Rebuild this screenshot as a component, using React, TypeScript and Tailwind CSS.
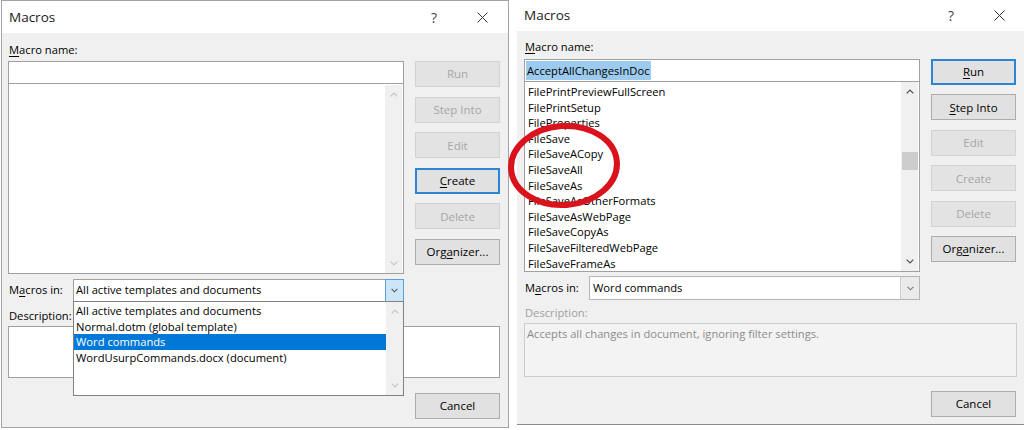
import React from "react"

function Chevron({ up, color = "#606060", w = 8 }: { up?: boolean; color?: string; w?: number }) {
  return (
    <svg width={w} height={5} viewBox="0 0 8 5" className="block">
      <path d={up ? "M0.7 4.3 L4 1 L7.3 4.3" : "M0.7 0.7 L4 4 L7.3 0.7"} stroke={color} strokeWidth={1.2} fill="none" />
    </svg>
  )
}

function CloseX() {
  return (
    <svg width={11} height={11} viewBox="0 0 11 11" className="block">
      <path d="M0.5 0.5 L10.5 10.5 M10.5 0.5 L0.5 10.5" stroke="#333" strokeWidth={1} fill="none" />
    </svg>
  )
}

function Label({ text, u }: { text: string; u?: number }) {
  if (u === undefined) return <>{text}</>
  return (
    <>
      {text.slice(0, u)}
      <span className="underline underline-offset-[2px]">{text[u]}</span>
      {text.slice(u + 1)}
    </>
  )
}

function Btn({ text, u, disabled, focus }: { text: string; u?: number; disabled?: boolean; focus?: boolean }) {
  return (
    <div
      className={`h-[26px] w-[85px] flex items-center justify-center text-[11.5px] ${
        disabled
          ? "bg-[#e3e3e3] border border-[#d2d2d2] text-[#a6a6a6]"
          : focus
          ? "bg-[#e1e1e1] border-2 border-[#2a86d3] text-black"
          : "bg-[#e1e1e1] border border-[#adadad] text-black"
      }`}
    >
      <Label text={text} u={u} />
    </div>
  )
}

function TitleBar({ h }: { h: string }) {
  return (
    <div className={`${h} bg-white flex items-center pl-[7px] pr-[20px]`}>
      <span className="text-[13.5px] text-[#1a1a1a]">Macros</span>
      <span className="ml-auto text-[14px] text-[#444] mr-[40px]">?</span>
      <CloseX />
    </div>
  )
}

function ScrollCol({ active, thumb }: { active?: boolean; thumb?: boolean }) {
  const c = active ? "#505050" : "#c4c4c4"
  return (
    <div className="w-[17px] h-full bg-[#f0f0f0] flex flex-col items-center py-[7px]">
      <Chevron up color={c} />
      {thumb && <div className="mt-[58px] w-[16px] h-[18px] bg-[#cdcdcd]" />}
      <div className="mt-auto">
        <Chevron color={c} />
      </div>
    </div>
  )
}

const leftItems = [
  "All active templates and documents",
  "Normal.dotm (global template)",
  "Word commands",
  "WordUsurpCommands.docx (document)",
]

const rightItems = [
  "FilePrintPreviewFullScreen",
  "FilePrintSetup",
  "FileProperties",
  "FileSave",
  "FileSaveACopy",
  "FileSaveAll",
  "FileSaveAs",
  "FileSaveAsOtherFormats",
  "FileSaveAsWebPage",
  "FileSaveCopyAs",
  "FileSaveFilteredWebPage",
  "FileSaveFrameAs",
]

function LeftDialog() {
  return (
    <div className="w-[508px] h-[428px] border border-[#a3a3a3] flex flex-col shrink-0 ml-[1px]">
      <TitleBar h="h-[32px]" />
      <div className="flex-1 bg-[#f0f0f0] pl-[6px] pr-[8px] pt-[9px]">
        <div className="flex gap-[11px]">
          <div className="w-[396px] flex flex-col">
            <div className="h-[19px] leading-[16px] pl-[1px] text-[11.2px]">
              <Label text="Macro name:" u={0} />
            </div>
            <div className="h-[23px] bg-white border border-[#a0a0a0]" />
            <div className="h-[190px] bg-white border border-t-0 border-[#a0a0a0] flex justify-end">
              <div className="h-full pr-[1px] pt-[1px]">
                <ScrollCol />
              </div>
            </div>
            <div className="mt-[5px] flex items-center h-[23px]">
              <div className="w-[65px] pl-[1px] text-[11.2px]">
                <Label text="Macros in:" u={1} />
              </div>
              <div className="relative flex-1 h-full bg-white border border-[#a0a0a0] flex">
                <div className="flex-1 pl-[2px] flex items-center text-[11.2px]">All active templates and documents</div>
                <div className="w-[19px] -my-[1px] -mr-[1px] bg-[#cde6f7] border border-[#5a9fd8] flex items-center justify-center">
                  <Chevron color="#555" w={7} />
                </div>
                <div className="absolute left-[-1px] right-[-1px] top-full h-[95px] bg-white border border-[#828282] flex z-10">
                  <div className="flex-1 pt-[1px]">
                    {leftItems.map(t => (
                      <div
                        key={t}
                        className={`h-[15.6px] leading-[15.6px] pl-[2px] text-[11.2px] ${
                          t === "Word commands" ? "bg-[#0078d7] text-white" : "text-black"
                        }`}
                      >
                        {t}
                      </div>
                    ))}
                  </div>
                  <div className="h-full">
                    <ScrollCol />
                  </div>
                </div>
              </div>
            </div>
          </div>
          <div className="w-[85px] pt-[19px] flex flex-col gap-[9.6px]">
            <Btn text="Run" disabled />
            <Btn text="Step Into" disabled />
            <Btn text="Edit" disabled />
            <Btn text="Create" u={0} focus />
            <Btn text="Delete" disabled />
            <Btn text="Organizer..." u={3} />
          </div>
        </div>
        <div className="mt-[6px] h-[16px] leading-[16px] pl-[1px] text-[11.2px]">Description:</div>
        <div className="mt-[2px] h-[52px] bg-white border border-[#a0a0a0]" />
        <div className="mt-[15px] flex justify-end">
          <Btn text="Cancel" />
        </div>
      </div>
    </div>
  )
}

function RightDialog() {
  return (
    <div className="w-[508px] h-[425px] border-b border-[#8a8a8a] flex flex-col shrink-0 ml-[8px]">
      <TitleBar h="h-[31px]" />
      <div className="flex-1 bg-[#f0f0f0] px-[7px] pt-[8px]">
        <div className="flex gap-[11px]">
          <div className="w-[396px] flex flex-col">
            <div className="h-[20px] leading-[16px] pl-[1px] text-[11.2px]">
              <Label text="Macro name:" u={0} />
            </div>
            <div className="h-[23px] bg-white border border-[#a0a0a0] pl-[1px] flex items-center">
              <span className="bg-[#9ccbef] h-[19px] leading-[19px] px-[1px] text-[11.2px]">AcceptAllChangesInDoc</span>
            </div>
            <div className="h-[190px] bg-white border border-t-0 border-[#a0a0a0] flex">
              <div className="flex-1 pl-[3px] pt-[2px]">
                {rightItems.map(t => (
                  <div key={t} className="h-[15.6px] leading-[15.6px] text-[11.2px]">
                    {t}
                  </div>
                ))}
              </div>
              <div className="h-full pr-[1px]">
                <ScrollCol active thumb />
              </div>
            </div>
            <div className="mt-[4px] flex items-center h-[24px]">
              <div className="w-[65px] pl-[1px] text-[11.2px]">
                <Label text="Macros in:" u={1} />
              </div>
              <div className="flex-1 h-full bg-white border border-[#b5b5b5] flex">
                <div className="flex-1 pl-[3px] flex items-center text-[11.2px]">Word commands</div>
                <div className="w-[19px] bg-[#eaeaea] border-l border-[#cfcfcf] flex items-center justify-center">
                  <Chevron color="#777" w={7} />
                </div>
              </div>
            </div>
          </div>
          <div className="w-[85px] pt-[20px] flex flex-col gap-[9.4px]">
            <Btn text="Run" u={0} focus />
            <Btn text="Step Into" u={0} />
            <Btn text="Edit" disabled />
            <Btn text="Create" disabled />
            <Btn text="Delete" disabled />
            <Btn text="Organizer..." u={3} />
          </div>
        </div>
        <div className="mt-[5px] h-[16px] leading-[16px] pl-[1px] text-[11.2px] text-[#a0a0a0]">Description:</div>
        <div className="mt-[2px] h-[54px] w-[493px] bg-[#f3f3f3] border border-[#cccccc] pl-[2px] pt-[2px] text-[11.2px] text-[#8c8c8c]">
          Accepts all changes in document, ignoring filter settings.
        </div>
        <div className="mt-[14px] w-[492px] flex justify-end">
          <Btn text="Cancel" />
        </div>
      </div>
    </div>
  )
}

export default function App() {
  return (
    <div className="relative w-[1024px] h-[430px] overflow-hidden bg-white flex font-['Open_Sans',sans-serif] text-black">
      <LeftDialog />
      <RightDialog />
      <svg className="absolute left-0 top-0 pointer-events-none" width={1024} height={430}>
        <ellipse cx={564} cy={165.5} rx={53} ry={39.5} transform="rotate(-4 564 165.5)" stroke="#d9121c" strokeWidth={6} fill="none" />
      </svg>
    </div>
  )
}
